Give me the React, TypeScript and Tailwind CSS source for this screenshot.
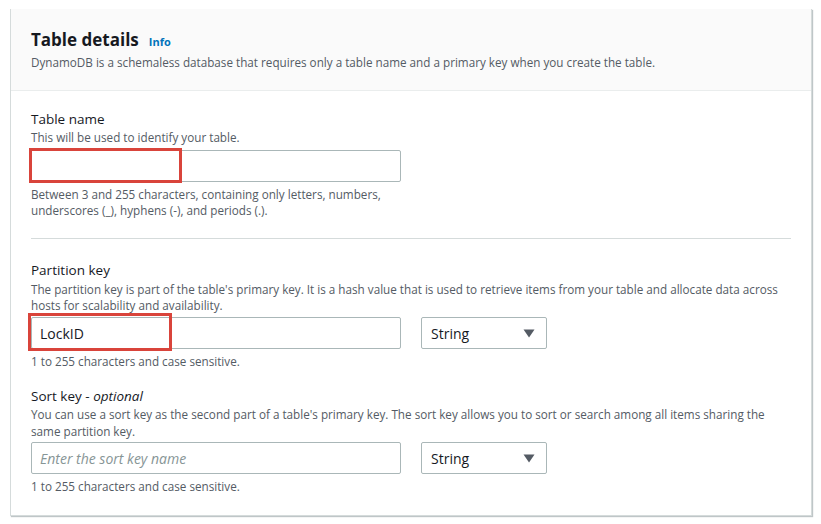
import React from "react";

const font = { fontFamily: '"Open Sans", "Noto Sans", Arial, sans-serif' };

function Select() {
  return (
    <div className="ml-[20px] flex h-[32px] w-[126px] items-center justify-between rounded-[2px] border border-[#aab7b8] bg-white pl-[9px] pr-[11px] text-[14px] text-[#16191f]">
      <span>String</span>
      <svg width="12" height="9" viewBox="0 0 12 9">
        <path d="M0.5 0.5 L11.5 0.5 L6 8.5 Z" fill="#545b64" />
      </svg>
    </div>
  );
}

export default function App() {
  return (
    <div className="h-[524px] w-[821px] bg-white pl-[10px] pt-[9px]" style={font}>
      <div className="w-[802px] border-x border-b border-[#d5dbdb] bg-white shadow-[1px_1px_1px_rgba(0,28,36,0.25)]">
        <div className="border-b border-[#eaeded] bg-[#fafafa] pl-[20px] pt-[19px] pb-[20px]">
          <div className="flex items-baseline">
            <h2 className="text-[17px] font-bold leading-[24px] text-[#16191f]">Table details</h2>
            <span className="ml-[10px] text-[11px] font-bold text-[#0073bb]">Info</span>
          </div>
          <p className="mt-[2px] text-[11.7px] leading-[16px] text-[#545b64]">
            DynamoDB is a schemaless database that requires only a table name and a primary key when you create the table.
          </p>
        </div>
        <div className="px-[20px] pt-[18px] pb-[21px]">
          <div className="text-[13.5px] leading-[20px] text-[#16191f]">Table name</div>
          <div className="text-[11.7px] leading-[16px] text-[#545b64]">This will be used to identify your table.</div>
          <div className="relative mt-[5px] h-[32px] w-[370px] rounded-[2px] border border-[#aab7b8] bg-white">
            <div className="absolute left-[-3px] top-[-3px] h-[35px] w-[153px] border-[3px] border-[#d9443b] bg-white" />
          </div>
          <div className="mt-[4px] text-[11.7px] leading-[16px] text-[#545b64]">
            Between 3 and 255 characters, containing only letters, numbers,
            <br />
            underscores (_), hyphens (-), and periods (.).
          </div>
          <div className="mt-[20px] h-px w-[760px] bg-[#d5dbdb]" />

          <div className="mt-[21px] text-[13.5px] leading-[20px] text-[#16191f]">Partition key</div>
          <div className="mt-[1px] text-[11.7px] leading-[16px] text-[#545b64]">
            The partition key is part of the table's primary key. It is a hash value that is used to retrieve items from your table and allocate data across
            <br />
            hosts for scalability and availability.
          </div>
          <div className="mt-[4px] flex items-center">
            <div className="relative flex h-[32px] w-[370px] items-center rounded-[2px] border border-[#aab7b8] bg-white pl-[8px] text-[14px] text-[#16191f]">
              <div className="absolute left-[-4px] top-[-5px] h-[38px] w-[144px] border-[3px] border-[#d9443b]" />
              <span>LockID</span>
            </div>
            <Select />
          </div>
          <div className="mt-[4px] text-[11.7px] leading-[16px] text-[#545b64]">1 to 255 characters and case sensitive.</div>

          <div className="mt-[17px] text-[13.5px] leading-[20px] text-[#16191f]">
            Sort key - <i>optional</i>
          </div>
          <div className="text-[11.7px] leading-[16.5px] text-[#545b64]">
            You can use a sort key as the second part of a table's primary key. The sort key allows you to sort or search among all items sharing the
            <br />
            same partition key.
          </div>
          <div className="mt-[3px] flex items-center">
            <div className="flex h-[32px] w-[370px] items-center rounded-[2px] border border-[#aab7b8] bg-white pl-[8px] text-[14px] italic text-[#879596]">
              Enter the sort key name
            </div>
            <Select />
          </div>
          <div className="mt-[4px] text-[11.7px] leading-[16px] text-[#545b64]">1 to 255 characters and case sensitive.</div>
        </div>
      </div>
    </div>
  );
}
